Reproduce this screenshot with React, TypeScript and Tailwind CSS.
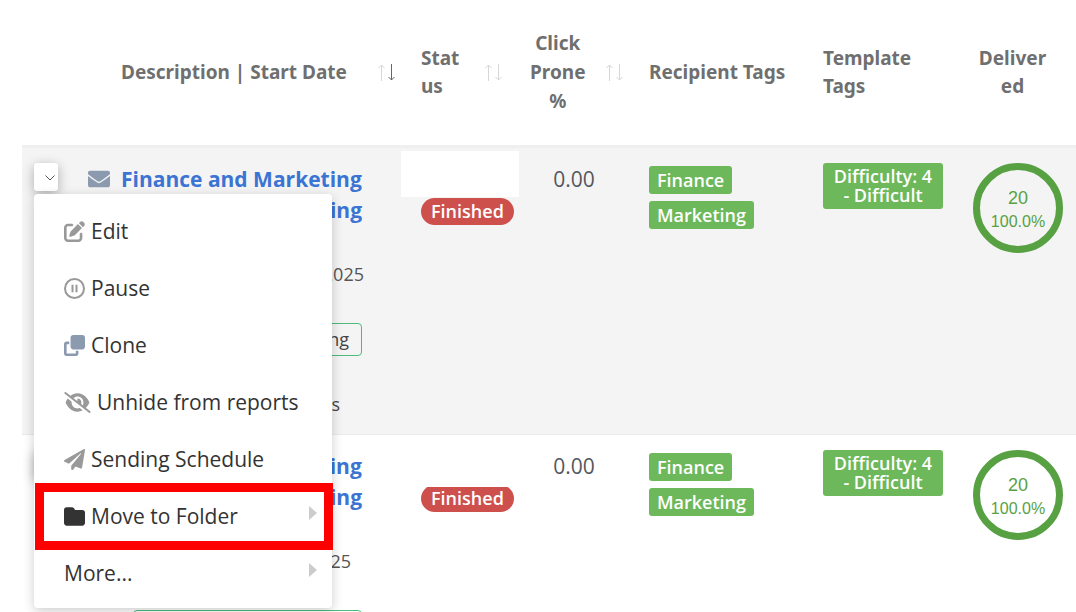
import React from "react";
import { FaClone, FaEyeSlash, FaFolder, FaPenToSquare } from "react-icons/fa6";
import { FaEnvelope, FaPaperPlane } from "react-icons/fa";
import { clsx } from "clsx";

interface Campaign {
  id: number;
  title: string[];
  date: string;
  dateWidth: string;
  tag: string;
  note: string;
  status: string;
  clickProne: string;
  recipientTags: string[];
  templateTag: string[];
  delivered: number;
  deliveredPercent: string;
}

const campaigns: Campaign[] = [
  {
    id: 1,
    title: ["Finance and Marketing", "Training"],
    date: "10/14/2025",
    dateWidth: "w-[243px]",
    tag: "Training",
    note: "Users",
    status: "Finished",
    clickProne: "0.00",
    recipientTags: ["Finance", "Marketing"],
    templateTag: ["Difficulty: 4", "- Difficult"],
    delivered: 20,
    deliveredPercent: "100.0%",
  },
  {
    id: 2,
    title: ["Finance and Marketing", "Training"],
    date: "9/9/2025",
    dateWidth: "w-[230px]",
    tag: "Training",
    note: "Users",
    status: "Finished",
    clickProne: "0.00",
    recipientTags: ["Finance", "Marketing"],
    templateTag: ["Difficulty: 4", "- Difficult"],
    delivered: 20,
    deliveredPercent: "100.0%",
  },
];

const PauseIcon = () => (
  <svg viewBox="0 0 21 21" className="h-[21px] w-[21px]" fill="none" stroke="currentColor" strokeWidth="2">
    <circle cx="10.5" cy="10.5" r="9.5" />
    <path d="M8.5 6.8v7.4M12.5 6.8v7.4" />
  </svg>
);

const menuItems = [
  { label: "Edit", icon: <FaPenToSquare className="h-[21px] w-[21px]" />, color: "text-[#999999]" },
  { label: "Pause", icon: <PauseIcon />, color: "text-[#999999]" },
  { label: "Clone", icon: <FaClone className="h-[21px] w-[21px]" />, color: "text-[#8c9ab0]" },
  { label: "Unhide from reports", icon: <FaEyeSlash className="h-[21px] w-[27px]" />, color: "text-[#999999]" },
  { label: "Sending Schedule", icon: <FaPaperPlane className="h-[21px] w-[21px]" />, color: "text-[#999999]" },
  { label: "Move to Folder", icon: <FaFolder className="h-[21px] w-[21px]" />, color: "text-[#333333]", submenu: true, highlighted: true },
  { label: "More...", submenu: true },
];

const SortArrows = ({ descending = false }: { descending?: boolean }) => (
  <svg viewBox="0 0 18 18" className="h-[18px] w-[18px] shrink-0" fill="none">
    <path d="M3.5 18V2M.5 5l3-3 3 3" stroke="#d6d6d6" />
    <path d="M13.5 1v16M10.5 14l3 3 3-3" stroke={descending ? "#666666" : "#d6d6d6"} />
  </svg>
);

const ActionMenu = () => (
  <div
    role="menu"
    className="absolute top-[46px] left-3 z-20 w-[298px] rounded bg-white pt-[9px] pb-[6px] shadow-[0_3px_12px_rgba(0,0,0,0.2)]"
  >
    {menuItems.map((item) => (
      <button
        key={item.label}
        type="button"
        role="menuitem"
        className="relative flex h-[57px] w-full items-center pr-[15px] pl-[30px] text-[21px] whitespace-nowrap text-[#333333]"
      >
        {item.icon && <span className={clsx("mr-[6px]", item.color)}>{item.icon}</span>}
        <span className="pt-0.5">{item.label}</span>
        {item.submenu && (
          <svg viewBox="0 0 8 14" className="mb-[6px] ml-auto h-[14px] w-2" fill="#cccccc">
            <path d="M0 0l8 7-8 7z" />
          </svg>
        )}
        {item.highlighted && (
          <span className="pointer-events-none absolute -inset-y-[5px] -right-px left-px border-9 border-[#ff0000]" />
        )}
      </button>
    ))}
  </div>
);

const DeliveredRing = ({ count, percent }: { count: number; percent: string }) => (
  <div className="relative h-[90px] w-[90px] font-['Liberation_Sans',sans-serif] text-[#57a143]">
    <svg viewBox="0 0 90 90" className="h-full w-full" fill="none">
      <circle cx="45" cy="45" r="41.5" stroke="#57a143" strokeWidth="7" />
    </svg>
    <div className="absolute inset-0 flex flex-col items-center justify-center pt-1">
      <span className="text-lg leading-6">{count}</span>
      <span className="text-base leading-6">{percent}</span>
    </div>
  </div>
);

const CampaignRow = ({ campaign, open }: { campaign: Campaign; open: boolean }) => (
  <tr className={clsx("h-[288px] border-b border-[#ebebeb] align-top", open ? "bg-[#f4f4f4]" : "bg-white")}>
    <td className="relative pt-[15px] pl-3">
      <button
        type="button"
        aria-label="Actions"
        className="flex h-7 w-6 items-center justify-center rounded-[3px] bg-white pt-[3px] pl-[7px] shadow-[0_3px_12px_rgba(0,0,0,0.3)]"
      >
        <svg viewBox="0 0 10 6" className="h-[6px] w-[10px]" fill="none" stroke="#555555">
          <path d="M.5.5L5 5 9.5.5" />
        </svg>
      </button>
      {open && <ActionMenu />}
    </td>
    <td className="pt-4">
      <div className="flex">
        <FaEnvelope className="mt-1 mr-[11px] h-[22px] w-[22px] shrink-0 text-[#8c9ab0]" />
        <div className="min-w-0">
          <a
            href="#"
            className="block text-[21px] leading-[31px] font-bold whitespace-nowrap text-[#3c74d3]"
          >
            {campaign.title[0]}
            <span className="block w-[241px] text-right">{campaign.title[1]}</span>
          </a>
          <p className={clsx("mt-9 text-right text-lg leading-6 text-[#555555]", campaign.dateWidth)}>
            {campaign.date}
          </p>
          <div className="mt-[37px] ml-3 h-[33px] w-[229px] rounded border border-[#4dbb7c] px-3 text-right text-lg leading-[31px] text-[#444444]">
            {campaign.tag}
          </div>
          <p className="mt-9 w-[219px] text-right text-lg leading-6 text-[#444444]">{campaign.note}</p>
        </div>
      </div>
    </td>
    <td className="relative pt-[50px] pl-5">
      <div className={clsx("absolute top-[3px] left-0 w-[118px] bg-white", open ? "h-[46px]" : "h-[49px]")} />
      <span className="inline-block h-[27px] rounded-full bg-[#cd504d] px-[10px] text-lg leading-[27px] font-semibold text-white">
        {campaign.status}
      </span>
    </td>
    <td className="pt-4 text-center text-[21px] leading-[31px] text-[#55575c]">{campaign.clickProne}</td>
    <td className="pt-[18px] pl-5">
      <div className="flex flex-col items-start gap-[7px]">
        {campaign.recipientTags.map((tag) => (
          <span key={tag} className="h-7 rounded-[3px] bg-[#6cb85a] px-2 text-lg leading-7 font-semibold text-white">
            {tag}
          </span>
        ))}
      </div>
    </td>
    <td className="px-5 pt-[15px]">
      <div className="rounded-[3px] bg-[#6cb85a] py-1 text-center text-lg leading-[19px] font-semibold whitespace-nowrap text-white">
        {campaign.templateTag.map((line) => (
          <span key={line} className="block">{line}</span>
        ))}
      </div>
    </td>
    <td className="pt-[15px] pl-[10px]">
      <DeliveredRing count={campaign.delivered} percent={campaign.deliveredPercent} />
    </td>
  </tr>
);

export const App: React.FC = () => {
  return (
    <main className="h-screen overflow-hidden bg-white pl-[22px] font-['Open_Sans',sans-serif]">
      <table className="w-full table-fixed border-collapse">
        <colgroup>
          <col className="w-[66px]" />
          <col />
          <col className="w-[118px]" />
          <col className="w-[110px]" />
          <col className="w-[174px]" />
          <col className="w-[160px]" />
          <col className="w-[113px]" />
        </colgroup>
        <thead>
          <tr className="h-[146px] border-b-3 border-[#efefef] text-left font-['Noto_Sans',sans-serif] text-[19px] leading-[28px] text-[#6f6f6f]">
            <th aria-label="Actions" />
            <th className="pl-[33px]">
              <div className="flex items-center justify-between pr-[5px]">
                <span className="whitespace-nowrap">Description | Start Date</span>
                <SortArrows descending />
              </div>
            </th>
            <th className="pl-5">
              <div className="flex items-center justify-between pr-4">
                <span>Stat<br />us</span>
                <SortArrows />
              </div>
            </th>
            <th>
              <div className="flex items-center justify-between pr-[5px] pl-[11px]">
                <span className="text-center leading-[29px]">Click<br />Prone<br />%</span>
                <SortArrows />
              </div>
            </th>
            <th className="pl-5 whitespace-nowrap">Recipient Tags</th>
            <th className="pl-5">Template<br />Tags</th>
            <th className="pr-[14px] text-center">Deliver<br />ed</th>
          </tr>
        </thead>
        <tbody>
          {campaigns.map((campaign, index) => (
            <CampaignRow key={campaign.id} campaign={campaign} open={index === 0} />
          ))}
        </tbody>
      </table>
    </main>
  );
};

export default App;
